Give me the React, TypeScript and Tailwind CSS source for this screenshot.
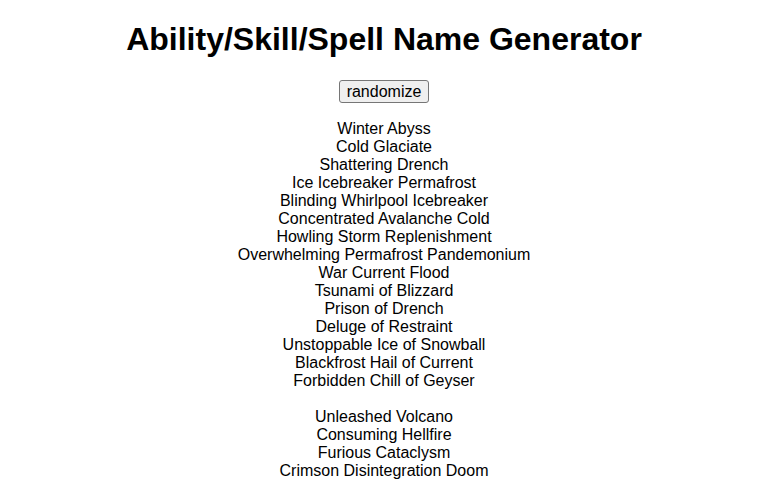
const iceNames = [
  "Winter Abyss",
  "Cold Glaciate",
  "Shattering Drench",
  "Ice Icebreaker Permafrost",
  "Blinding Whirlpool Icebreaker",
  "Concentrated Avalanche Cold",
  "Howling Storm Replenishment",
  "Overwhelming Permafrost Pandemonium",
  "War Current Flood",
  "Tsunami of Blizzard",
  "Prison of Drench",
  "Deluge of Restraint",
  "Unstoppable Ice of Snowball",
  "Blackfrost Hail of Current",
  "Forbidden Chill of Geyser",
];

const fireNames = [
  "Unleashed Volcano",
  "Consuming Hellfire",
  "Furious Cataclysm",
  "Crimson Disintegration Doom",
];

export default function App() {
  return (
    <div className="min-h-screen bg-white text-black text-center font-['Liberation_Sans',Arial,sans-serif] text-base">
      <h1 className="text-[32px] font-bold leading-[37px] pt-[21px] mb-[22px]">
        Ability/Skill/Spell Name Generator
      </h1>
      <button
        type="button"
        className="text-base leading-[19px] px-[7px] py-[1px] border border-[#767676] rounded-[3px] bg-[#efefef] text-black"
      >
        randomize
      </button>
      <div className="mt-[16px] leading-[18px]">
        {iceNames.map((n) => (
          <div key={n}>{n}</div>
        ))}
        <div className="h-[18px]" />
        {fireNames.map((n) => (
          <div key={n}>{n}</div>
        ))}
      </div>
    </div>
  );
}
